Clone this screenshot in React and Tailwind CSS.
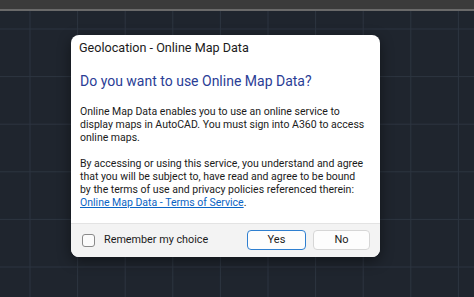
import React, { useState } from 'react';

function GridBackdrop() {
  // faint drafting grid behind the dialog
  const xs = [];
  const ys = [];
  for (let i = 0; i < 11; i++) xs.push(30 + i * 47.6);
  for (let i = 0; i < 7; i++) ys.push(18 + i * 47.6);
  return (
    <svg className="absolute inset-0 w-full h-full" width="474" height="286">
      {xs.map((x) => (
        <line key={'x' + x} x1={x} y1="0" x2={x} y2="286" stroke="#2d3540" strokeWidth="1" />
      ))}
      {ys.map((y) => (
        <line key={'y' + y} x1="0" y1={y} x2="474" y2={y} stroke="#2d3540" strokeWidth="1" />
      ))}
    </svg>
  );
}

export default function App() {
  const [remember, setRemember] = useState(false);

  return (
    <div
      className="w-[474px] h-[297px] flex flex-col overflow-hidden bg-[#1f252e]"
      style={{ fontFamily: 'Roboto, "Noto Sans", sans-serif' }}
    >
      <div className="h-[9px] bg-[#3b3b3b]" />
      <div className="h-[2px] bg-[#6a6a6a]" />

      <div className="relative flex-1">
        <GridBackdrop />

        <div className="relative ml-[71px] mt-[24px] w-[309px] rounded-[8px] bg-white shadow-[0_4px_14px_rgba(0,0,0,0.45)] overflow-hidden">
          <div className="h-[26px] flex items-center pl-[8px] text-[12.6px] text-[#1b1b1b]">
            Geolocation - Online Map Data
          </div>

          <div className="px-[9px]">
            <h1 className="mt-[10px] text-[14px] leading-[20px] text-[#2a3d96] whitespace-nowrap">
              Do you want to use Online Map Data?
            </h1>

            <div className="mt-[15px] text-[10.5px] leading-[12.8px] text-[#1b1b1b] whitespace-nowrap">
              <p>
                Online Map Data enables you to use an online service to
                <br />
                display maps in AutoCAD. You must sign into A360 to access
                <br />
                online maps.
              </p>
              <p className="mt-[14px]">
                By accessing or using this service, you understand and agree
                <br />
                that you will be subject to, have read and agree to be bound
                <br />
                by the terms of use and privacy policies referenced therein:
                <br />
                <a href="#" className="text-[#0a64c4] underline">
                  Online Map Data - Terms of Service
                </a>
                .
              </p>
            </div>
          </div>

          <div className="mt-[13px] h-[34px] flex items-center border-t border-[#e3e3e3] bg-[#f3f3f3] pl-[11px] pr-[10px]">
            <label className="flex items-center gap-[9px] text-[10.8px] text-[#1b1b1b]">
              <input
                type="checkbox"
                checked={remember}
                onChange={(e) => setRemember(e.target.checked)}
                className="appearance-none w-[13px] h-[13px] rounded-[3px] border border-[#8a8a8a] bg-[#fbfbfb]"
              />
              Remember my choice
            </label>

            <div className="ml-auto flex gap-[7px]">
              <button className="w-[59px] h-[20px] rounded-[4px] border border-[#2f7fd0] bg-[#fdfdfd] text-[11px] text-[#1b1b1b]">
                Yes
              </button>
              <button className="w-[57px] h-[20px] rounded-[4px] border border-[#d6d6d6] bg-[#fdfdfd] text-[11px] text-[#1b1b1b]">
                No
              </button>
            </div>
          </div>
        </div>
      </div>
    </div>
  );
}
